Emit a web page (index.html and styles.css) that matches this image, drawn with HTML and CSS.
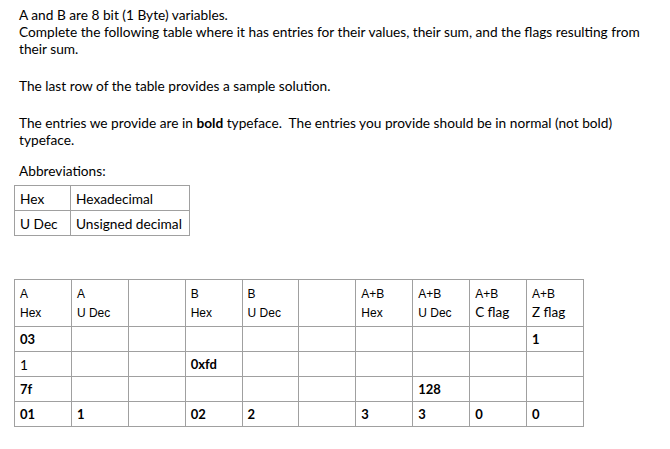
FILE: index.html
```html
<!DOCTYPE html>
<html>
<head>
<meta charset="utf-8">
<link rel="stylesheet" href="styles.css">
</head>
<body>
<div class="page">
  <p class="para first">A and B are 8 bit (1 Byte) variables.<br>Complete the following table where it has entries for their values, their sum, and the flags resulting from their sum.</p>
  <p class="para">The last row of the table provides a sample solution.</p>
  <p class="para">The entries we provide are in <b>bold</b> typeface.&nbsp; The entries you provide should be in normal (not bold) typeface.</p>
  <p class="para abbr-title">Abbreviations:</p>
  <table class="abbr">
    <tr><td class="c1">Hex</td><td class="c2">Hexadecimal</td></tr>
    <tr><td class="c1">U Dec</td><td class="c2">Unsigned decimal</td></tr>
  </table>
  <table class="main">
    <tr class="head">
      <td><span class="ar">A<br>Hex</span></td>
      <td><span class="ar">A<br>U Dec</span></td>
      <td></td>
      <td><span class="ar">B<br>Hex</span></td>
      <td><span class="ar">B<br>U Dec</span></td>
      <td></td>
      <td><span class="ar">A+B<br>Hex</span></td>
      <td><span class="ar">A+B<br>U Dec</span></td>
      <td><span class="ar">A+B</span><br><span class="cal">C flag</span></td>
      <td><span class="ar">A+B</span><br><span class="cal">Z flag</span></td>
    </tr>
    <tr>
      <td><b>03</b></td><td></td><td></td><td></td><td></td><td></td><td></td><td></td><td></td><td><b>1</b></td>
    </tr>
    <tr>
      <td>1</td><td></td><td></td><td><b>0xfd</b></td><td></td><td></td><td></td><td></td><td></td><td></td>
    </tr>
    <tr>
      <td><b>7f</b></td><td></td><td></td><td></td><td></td><td></td><td></td><td><b>128</b></td><td></td><td></td>
    </tr>
    <tr>
      <td><b>01</b></td><td><b>1</b></td><td></td><td><b>02</b></td><td><b>2</b></td><td></td><td><b>3</b></td><td><b>3</b></td><td><b>0</b></td><td><b>0</b></td>
    </tr>
  </table>
</div>
</body>
</html>
```

FILE: styles.css
```css
html, body {
  margin: 0;
  padding: 0;
  background: #ffffff;
}
body {
  font-family: Lato, "Liberation Sans", sans-serif;
  font-size: 13.7px;
  color: #000000;
  line-height: 17px;
}
.page {
  padding: 6px 0 0 14px;
}
.para {
  margin: 0 0 20px 0;
  padding-left: 5px;
  width: 628px;
}
.para.abbr-title {
  margin-top: -6px;
  margin-bottom: 6px;
}
table {
  border-collapse: collapse;
  table-layout: fixed;
}
td {
  border: 1px solid #a0a0a0;
  padding: 0 5px;
  white-space: nowrap;
  overflow: hidden;
}
.abbr {
  width: 175px;
}
.abbr td {
  height: 24px;
  vertical-align: middle;
}
.abbr .c1 { width: 45px; }
.abbr .c2 { width: 108px; }
.main {
  margin-top: 43px;
  width: 570px;
}
.main td {
  height: 24px;
  vertical-align: middle;
}
.main tr.head td {
  height: 34px;
  padding-top: 4px;
  padding-bottom: 4px;
  vertical-align: top;
}
.ar {
  font-family: "Liberation Sans", Arial, sans-serif;
  font-size: 12px;
}
.cal {
  font-family: Lato, sans-serif;
  font-size: 13.5px;
}
b {
  font-weight: bold;
}
.main b {
  font-size: 13px;
}
```
